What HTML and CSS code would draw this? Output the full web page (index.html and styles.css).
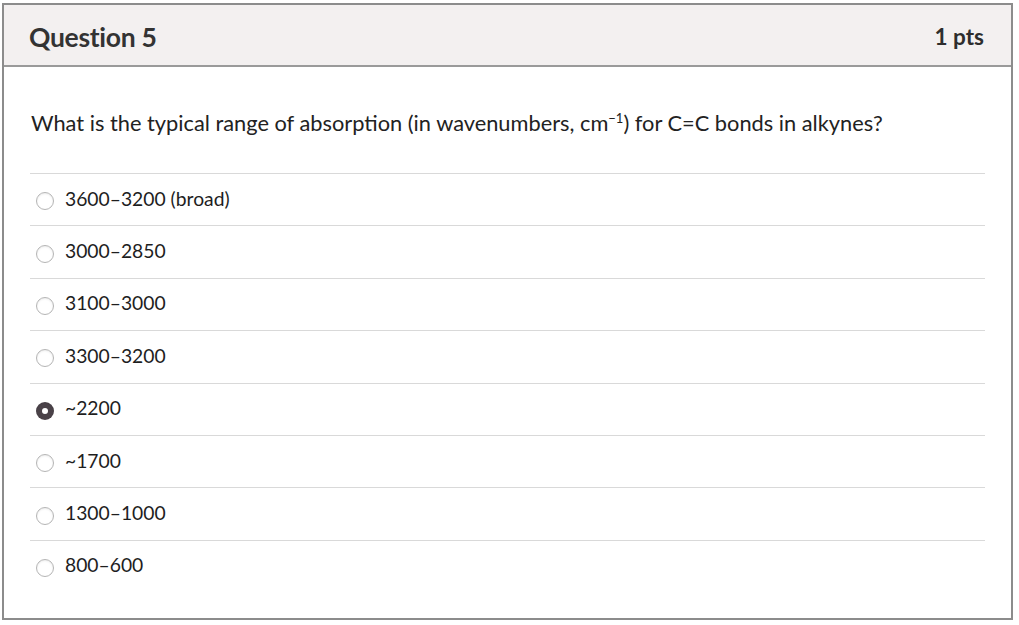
FILE: index.html
```html
<!doctype html>
<html lang="en">
<head>
  <meta charset="utf-8">
  <title>Question 5</title>
  <link rel="stylesheet" href="styles.css">
</head>
<body>

  <div class="quiz">
    <div class="quiz-header">
      <h2>Question 5</h2>
      <span class="pts">1 pts</span>
    </div>

    <div class="quiz-body">
      <p class="question">What is the typical range of absorption (in wavenumbers, cm<sup>&minus;1</sup>) for C=C bonds in alkynes?</p>

      <div class="answers">
        <label class="answer"><span class="radio"></span>3600–3200 (broad)</label>
        <label class="answer"><span class="radio"></span>3000–2850</label>
        <label class="answer"><span class="radio"></span>3100–3000</label>
        <label class="answer"><span class="radio"></span>3300–3200</label>
        <label class="answer"><span class="radio checked"></span>~2200</label>
        <label class="answer"><span class="radio"></span>~1700</label>
        <label class="answer"><span class="radio"></span>1300–1000</label>
        <label class="answer"><span class="radio"></span>800–600</label>
      </div>
    </div>
  </div>

</body>
</html>
```

FILE: styles.css
```css
body{
  margin:0; padding:3px 0 0 2px;
  background:#fff; color:#2d2d2d;
  font-family:Lato,'Open Sans',sans-serif;
}
.quiz{
  width:1011px; height:617px; box-sizing:border-box;
  border:2px solid #8c8c8c; background:#fff;
}
.quiz-header{
  display:flex; justify-content:space-between; align-items:center;
  height:62px; box-sizing:border-box; padding:3px 27px 0 25px;
  background:#f3f0f0; border-bottom:2px solid #9a9a9a;
}
.quiz-header h2{
  margin:0; font-size:26.5px; font-weight:700; color:#333; letter-spacing:-.3px;
}
.pts{ font-size:22.5px; font-weight:700; color:#2d2d2d; }
.quiz-body{ padding:0 26px 0 26px; }
.question{
  margin:0; padding:44px 0 0 1px; height:63px; box-sizing:border-box;
  font-size:21.8px; line-height:24px; color:#222;
}
.question sup{ font-size:13px; line-height:0; vertical-align:8px; }
.answers{ margin-top:43px; }
.answer{
  display:flex; align-items:center; height:52.4px; box-sizing:border-box;
  padding-bottom:3px;
  border-top:1.5px solid #d9d9d9; font-size:19.3px; color:#1e1e1e;
}
.radio{
  width:18px; height:18px; border-radius:50%; box-sizing:border-box;
  border:1px solid #b5b5b5; margin:6px 11px 0 6px; flex:none;
  box-shadow:inset 0 1px 2px rgba(0,0,0,.08);
}
.radio.checked{
  background:#4a4248; border:none; position:relative;
}
.radio.checked::after{
  content:""; position:absolute; left:6px; top:6px;
  width:6px; height:6px; border-radius:50%; background:#fff;
}
```
